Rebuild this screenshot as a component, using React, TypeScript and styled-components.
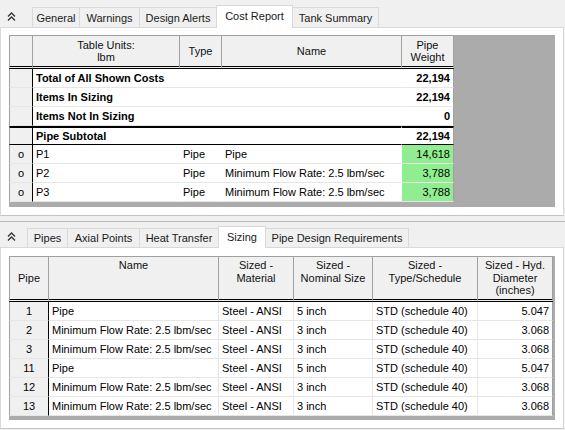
import React from 'react'
import styled, { createGlobalStyle, css } from 'styled-components'

const GlobalStyle = createGlobalStyle`
  html, body {
    margin: 0;
    padding: 0;
    background: #f0f0f0;
  }
  body {
    font-family: "Liberation Sans", Arial, sans-serif;
    font-size: 11px;
    color: #000;
  }
`

const Window = styled.div`
  width: 565px;
  height: 430px;
  background: #f0f0f0;
  overflow: hidden;
  display: flex;
  flex-direction: column;
`

const TabBar = styled.div<{ $height: number }>`
  display: flex;
  align-items: flex-end;
  height: ${p => p.$height}px;
`

const Collapse = styled.div<{ $width: number; $height: number }>`
  box-sizing: border-box;
  width: ${p => p.$width}px;
  height: ${p => p.$height}px;
  padding: 0 0 2px 7px;
  display: flex;
  align-items: center;
`

const Tab = styled.div<{ $width: number; $height: number; $active?: boolean }>`
  position: relative;
  box-sizing: border-box;
  width: ${p => p.$width}px;
  height: ${p => p.$height}px;
  margin-right: -1px;
  border: 1px solid #d9d9d9;
  border-bottom: none;
  background: #f0f0f0;
  color: #1a1a1a;
  display: flex;
  align-items: center;
  justify-content: center;
  white-space: nowrap;
  ${p =>
    p.$active &&
    css`
      height: ${p.$height + 3}px;
      margin-bottom: -1px;
      padding-bottom: 2px;
      background: #fff;
      z-index: 1;
    `}
`

const Panel = styled.div<{ $height: number; $padTop: number }>`
  box-sizing: border-box;
  width: 564px;
  height: ${p => p.$height}px;
  padding: ${p => p.$padTop}px 8px 8px;
  background: #fff;
  border: 1px solid #d9d9d9;
  border-bottom-color: #c4c4c4;
`

const Splitter = styled.div`
  height: 5px;
  border-bottom: 1px solid #b9b9b9;
`

const GridFrame = styled.div<{ $height: number }>`
  height: ${p => p.$height}px;
  background: #ababab;
  overflow: hidden;
`

const Grid = styled.div<{ $cols: string }>`
  display: grid;
  grid-template-columns: ${p => p.$cols};
  width: max-content;
`

const HeadCell = styled.div<{ $height: number; $valign?: 'top' | 'middle'; $first?: boolean }>`
  box-sizing: border-box;
  height: ${p => p.$height}px;
  padding: ${p => (p.$valign === 'top' ? '2px 2px 0' : '0 2px')};
  background: #f0f0f0;
  border-top: 1px solid #a0a0a0;
  border-right: 1px solid #a0a0a0;
  border-bottom: 3px double #000;
  ${p => p.$first && 'border-left: 1px solid #a0a0a0;'}
  display: flex;
  flex-direction: column;
  align-items: center;
  justify-content: ${p => (p.$valign === 'top' ? 'flex-start' : 'center')};
  text-align: center;
  line-height: 12.5px;
  white-space: pre-line;
  color: #111;
`

const Cell = styled.div<{
  $align?: 'left' | 'right' | 'center'
  $bold?: boolean
  $fill?: string
  $vline?: string
  $rule?: 'subtotal'
  $span?: number
}>`
  box-sizing: border-box;
  height: 19px;
  padding: 0 3px;
  background: ${p => p.$fill || '#fff'};
  border-bottom: 1px solid #e6e6e6;
  border-right: 1px solid ${p => p.$vline || '#fff'};
  display: flex;
  align-items: center;
  justify-content: ${p =>
    p.$align === 'right' ? 'flex-end' : p.$align === 'center' ? 'center' : 'flex-start'};
  font-weight: ${p => (p.$bold ? 'bold' : 'normal')};
  white-space: nowrap;
  overflow: hidden;
  ${p => p.$span && `grid-column: span ${p.$span};`}
  ${p =>
    p.$rule === 'subtotal' &&
    css`
      border-top: 2px solid #000;
      border-bottom-color: #000;
    `}
`

const RowHead = styled(Cell)`
  background: #f0f0f0;
  border-left: 1px solid #a0a0a0;
  border-right: 1px solid #000;
  justify-content: center;
`

const CollapseIcon = () => (
  <svg width="9" height="9" viewBox="0 0 9 9">
    <path d="M1 4.5 L4.5 1 L8 4.5 M1 8.5 L4.5 5 L8 8.5" fill="none" stroke="#333" strokeWidth="1.3" />
  </svg>
)

interface TabDef {
  label: string
  width: number
}

interface TabStripProps {
  tabs: TabDef[]
  active: string
  height: number
  tabHeight: number
  indent: number
}

const TabStrip: React.FunctionComponent<TabStripProps> = ({ tabs, active, height, tabHeight, indent }) => (
  <TabBar $height={height}>
    <Collapse $width={indent} $height={tabHeight}>
      <CollapseIcon />
    </Collapse>
    {tabs.map(t => (
      <Tab key={t.label} $width={t.width} $height={tabHeight} $active={t.label === active}>
        {t.label}
      </Tab>
    ))}
  </TabBar>
)

const topTabs: TabDef[] = [
  { label: 'General', width: 48 },
  { label: 'Warnings', width: 61 },
  { label: 'Design Alerts', width: 78 },
  { label: 'Cost Report', width: 77 },
  { label: 'Tank Summary', width: 87 },
]

const bottomTabs: TabDef[] = [
  { label: 'Pipes', width: 41 },
  { label: 'Axial Points', width: 73 },
  { label: 'Heat Transfer', width: 80 },
  { label: 'Sizing', width: 48 },
  { label: 'Pipe Design Requirements', width: 144 },
]

const costSummary = [
  { label: 'Total of All Shown Costs', weight: '22,194' },
  { label: 'Items In Sizing', weight: '22,194' },
  { label: 'Items Not In Sizing', weight: '0' },
]

const costItems = [
  { id: 'P1', type: 'Pipe', name: 'Pipe', weight: '14,618' },
  { id: 'P2', type: 'Pipe', name: 'Minimum Flow Rate: 2.5 lbm/sec', weight: '3,788' },
  { id: 'P3', type: 'Pipe', name: 'Minimum Flow Rate: 2.5 lbm/sec', weight: '3,788' },
]

const sizingRows = [
  { pipe: '1', name: 'Pipe', size: '5 inch', dia: '5.047' },
  { pipe: '2', name: 'Minimum Flow Rate: 2.5 lbm/sec', size: '3 inch', dia: '3.068' },
  { pipe: '3', name: 'Minimum Flow Rate: 2.5 lbm/sec', size: '3 inch', dia: '3.068' },
  { pipe: '11', name: 'Pipe', size: '5 inch', dia: '5.047' },
  { pipe: '12', name: 'Minimum Flow Rate: 2.5 lbm/sec', size: '3 inch', dia: '3.068' },
  { pipe: '13', name: 'Minimum Flow Rate: 2.5 lbm/sec', size: '3 inch', dia: '3.068' },
]

const GREEN = '#90ee90'
const EDGE = '#a0a0a0'
const FAINT = '#e6e6e6'

const CostReport = () => (
  <GridFrame $height={172}>
    <Grid $cols="24px 147px 42px 180px 52px">
      <HeadCell $height={34} $first />
      <HeadCell $height={34}>{'Table Units:\nlbm'}</HeadCell>
      <HeadCell $height={34}>Type</HeadCell>
      <HeadCell $height={34}>Name</HeadCell>
      <HeadCell $height={34}>{'Pipe\nWeight'}</HeadCell>

      {costSummary.map(r => (
        <React.Fragment key={r.label}>
          <RowHead />
          <Cell $span={3} $bold>{r.label}</Cell>
          <Cell $align="right" $bold $vline={EDGE}>{r.weight}</Cell>
        </React.Fragment>
      ))}

      <RowHead $rule="subtotal" />
      <Cell $span={3} $bold $rule="subtotal">Pipe Subtotal</Cell>
      <Cell $align="right" $bold $vline={EDGE} $rule="subtotal">22,194</Cell>

      {costItems.map(r => (
        <React.Fragment key={r.id}>
          <RowHead>o</RowHead>
          <Cell>{r.id}</Cell>
          <Cell>{r.type}</Cell>
          <Cell>{r.name}</Cell>
          <Cell $align="right" $fill={GREEN} $vline={EDGE}>{r.weight}</Cell>
        </React.Fragment>
      ))}
    </Grid>
  </GridFrame>
)

const SizingTable = () => (
  <GridFrame $height={164}>
    <Grid $cols="40px 170px 75px 79px 105px 75px">
      <HeadCell $height={46} $first>Pipe</HeadCell>
      <HeadCell $height={46} $valign="top">Name</HeadCell>
      <HeadCell $height={46} $valign="top">{'Sized -\nMaterial'}</HeadCell>
      <HeadCell $height={46} $valign="top">{'Sized -\nNominal Size'}</HeadCell>
      <HeadCell $height={46} $valign="top">{'Sized -\nType/Schedule'}</HeadCell>
      <HeadCell $height={46} $valign="top">{'Sized - Hyd.\nDiameter\n(inches)'}</HeadCell>

      {sizingRows.map(r => (
        <React.Fragment key={r.pipe}>
          <RowHead>{r.pipe}</RowHead>
          <Cell $vline={FAINT}>{r.name}</Cell>
          <Cell $vline={FAINT}>Steel - ANSI</Cell>
          <Cell $vline={FAINT}>{r.size}</Cell>
          <Cell $vline={FAINT}>STD (schedule 40)</Cell>
          <Cell $align="right" $vline={EDGE}>{r.dia}</Cell>
        </React.Fragment>
      ))}
    </Grid>
  </GridFrame>
)

const App = () => (
  <Window>
    <GlobalStyle />
    <TabStrip tabs={topTabs} active="Cost Report" height={27} tabHeight={20} indent={32} />
    <Panel $height={189} $padTop={7}>
      <CostReport />
    </Panel>
    <Splitter />
    <TabStrip tabs={bottomTabs} active="Sizing" height={25} tabHeight={19} indent={27} />
    <Panel $height={182} $padTop={8}>
      <SizingTable />
    </Panel>
  </Window>
)

export default App
